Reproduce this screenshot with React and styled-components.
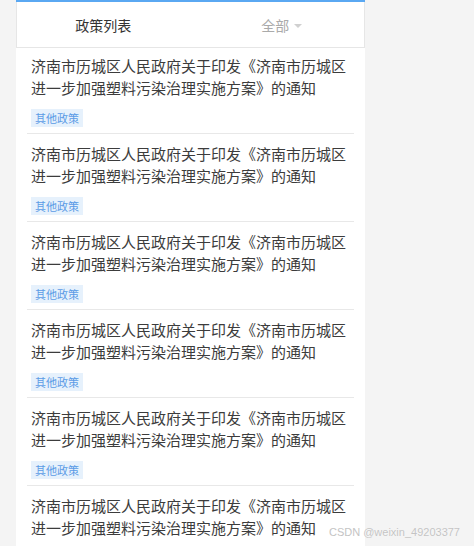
import React, { useState } from "react";
import styled, { createGlobalStyle } from "styled-components";

const GlobalStyle = createGlobalStyle`
  html, body {
    margin: 0;
    padding: 0;
    background: #f4f4f4;
    font-family: "Noto Sans CJK SC", "Liberation Sans", sans-serif;
  }
`;

const policies = Array.from({ length: 6 }, (_, i) => ({
  id: i,
  type: "其他政策",
}));

const App = () => {
  const [tab, setTab] = useState("LIST");

  return (
    <>
      <GlobalStyle />
      <Page>
        <Panel>
          <Header>
            <Tab active={tab === "LIST"} offset={4} onClick={() => setTab("LIST")}>
              政策列表
            </Tab>
            <Tab active={tab === "ALL"} offset={14} onClick={() => setTab("ALL")}>
              全部
              <Caret />
            </Tab>
          </Header>

          <List>
            {policies.map((p) => (
              <Item key={p.id}>
                <Title>
                  济南市历城区人民政府关于印发《济南市历城区
                  <br />
                  进一步加强塑料污染治理实施方案》的通知
                </Title>
                <Tag>{p.type}</Tag>
              </Item>
            ))}
          </List>
        </Panel>
        <Mark>CSDN @weixin_49203377</Mark>
      </Page>
    </>
  );
};

export default App;

const Page = styled.div`
  position: relative;
  height: 546px;
  overflow: hidden;
  padding-left: 16px;
`;

const Panel = styled.div`
  width: 349px;
  min-height: 100%;
  background: #fff;
  border-top: 2px solid #5aa8f2;
`;

const Header = styled.div`
  display: flex;
  height: 45px;
  border: 1px solid #e6e6e6;
  border-top: none;
`;

const Tab = styled.div`
  flex: 1;
  display: flex;
  align-items: center;
  justify-content: center;
  padding-left: ${({ offset }) => offset || 0}px;
  font-size: 14px;
  color: ${({ active }) => (active ? "#333" : "#aaa")};
  cursor: pointer;
`;

const Caret = styled.span`
  margin-left: 5px;
  margin-top: 2px;
  width: 0;
  height: 0;
  border-left: 4px solid transparent;
  border-right: 4px solid transparent;
  border-top: 4px solid #d0d0d0;
`;

const List = styled.div`
  padding: 0 11px;
`;

const Item = styled.div`
  padding: 9px 4px 6px;
  border-bottom: 1px solid #e8e8e8;

  &:first-child {
    padding-top: 7px;
  }
`;

const Title = styled.p`
  margin: 0;
  font-size: 15px;
  line-height: 22px;
  color: #3c3c3c;
  white-space: nowrap;
`;

const Tag = styled.div`
  width: fit-content;
  margin-top: 10px;
  padding: 0 4px;
  height: 18px;
  line-height: 18px;
  font-size: 11px;
  color: #5b9be6;
  background: #e6f1fc;
`;

const Mark = styled.div`
  position: absolute;
  right: 14px;
  bottom: 8px;
  font-family: "Liberation Sans", sans-serif;
  font-size: 11px;
  color: #c4c4c4;
  text-shadow: 0 0 1px #fff;
`;
